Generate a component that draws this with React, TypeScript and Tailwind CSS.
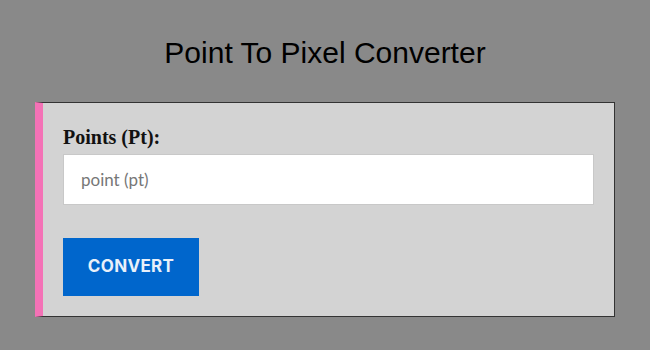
import React from "react";

export default function App() {
  return (
    <div className="w-[650px] h-[350px] bg-[#898989] overflow-hidden flex flex-col items-start">
      <h1 className="self-stretch pt-[36px] text-center text-[30px] leading-[34px] text-black font-['Liberation_Sans',Arial,sans-serif]">
        Point To Pixel Converter
      </h1>
      <div className="ml-[35px] mt-[32px] w-[580px] h-[215px] bg-[#d3d3d3] border border-[#333] border-l-[8px] border-l-[#f472b6] px-[20px] pt-[22px] flex flex-col items-start">
        <label className="text-[20px] leading-[24px] font-bold text-[#111] font-['Liberation_Serif','Times_New_Roman',serif]">
          Points (Pt):
        </label>
        <input
          type="text"
          placeholder="point (pt)"
          className="mt-[5px] w-[531px] h-[51px] bg-white border border-[#c8c8c8] px-[17px] text-[17px] placeholder:text-[#777] outline-none font-['Lato',sans-serif]"
        />
        <button className="mt-[33px] w-[136px] h-[58px] bg-[#0066cc] text-[#e8f0fa] text-[17px] font-bold tracking-[0.3px] font-['Inter',sans-serif]">
          CONVERT
        </button>
      </div>
    </div>
  );
}
